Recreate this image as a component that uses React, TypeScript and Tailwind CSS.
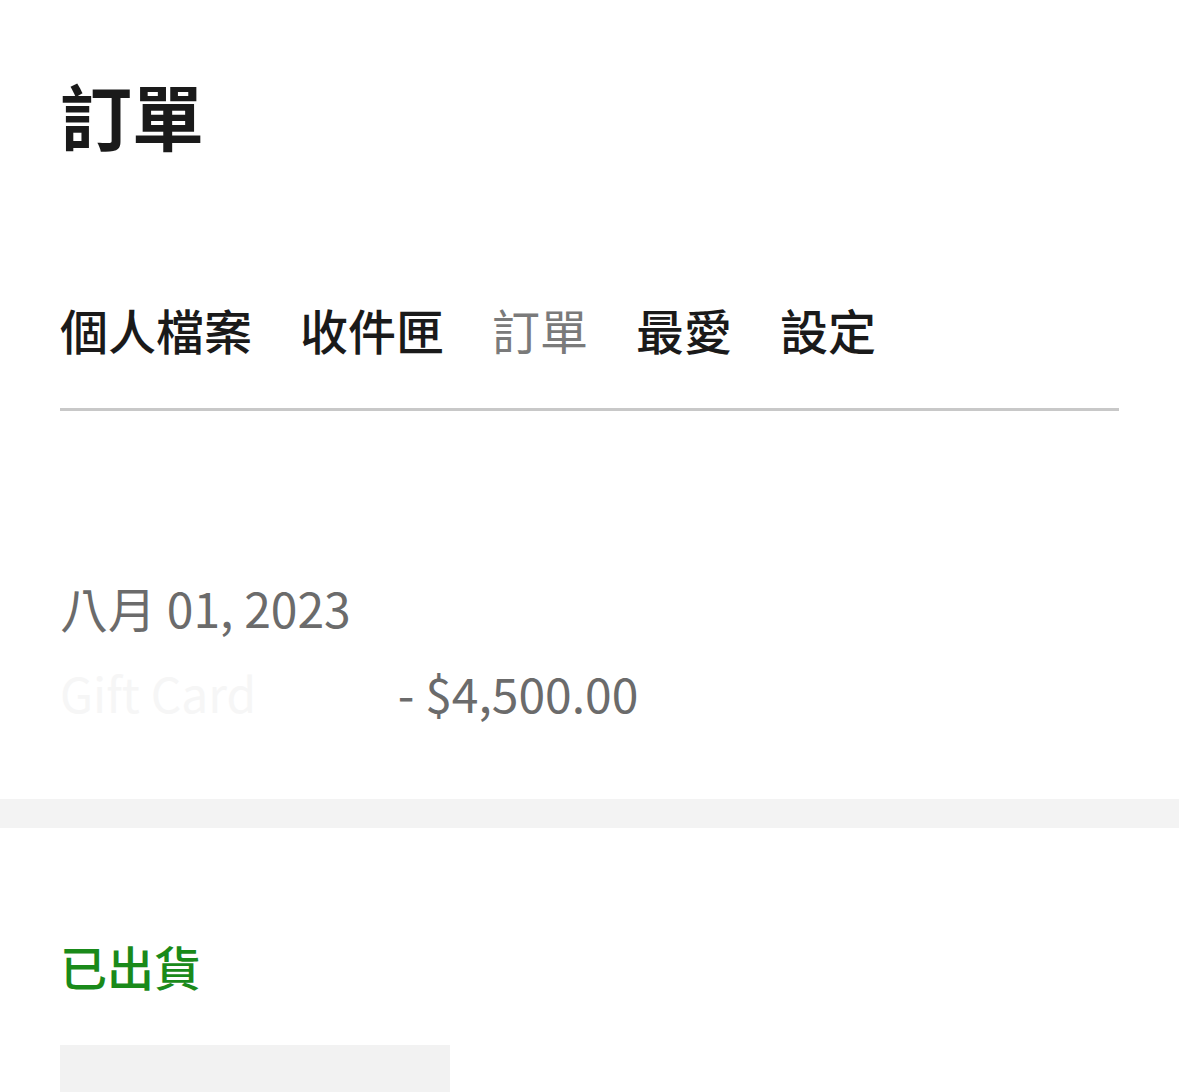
import React from "react";

const font = { fontFamily: '"Noto Sans CJK TC", "Noto Sans", sans-serif' };

export default function App() {
  const tabs = ["個人檔案", "收件匣", "訂單", "最愛", "設定"];
  return (
    <div className="min-h-[1092px] bg-white" style={font}>
      <div className="px-[60px] pt-[78px]">
        <h1 className="text-[72px] font-bold leading-none text-[#1a1a1a]">訂單</h1>
        <nav className="mt-[155px] flex gap-[48px] pb-[55px] border-b-[3px] border-[#c8c8c8]">
          {tabs.map((t) => (
            <span
              key={t}
              className={
                "text-[48px] leading-none " +
                (t === "訂單" ? "text-[#7a7a7a] font-normal" : "text-[#1a1a1a] font-medium")
              }
            >
              {t}
            </span>
          ))}
        </nav>
        <div className="pt-[172px] pb-[83px]">
          <div className="text-[48px] leading-none text-[#6b6b6b]">八月 01, 2023</div>
          <div className="mt-[37px] text-[48px] leading-none text-[#6b6b6b] whitespace-nowrap">
            <span className="inline-block w-[327px] text-[#f6f6f6]">Gift Card</span> - $4,500.00
          </div>
        </div>
      </div>
      <div className="h-[29px] bg-[#f3f3f3]" />
      <div className="px-[60px] pt-[114px]">
        <div className="text-[47px] font-medium leading-none text-[#1a8a1a]">已出貨</div>
        <div className="mt-[56px] h-[60px] w-[390px] bg-[#f2f2f2]" />
      </div>
    </div>
  );
}
